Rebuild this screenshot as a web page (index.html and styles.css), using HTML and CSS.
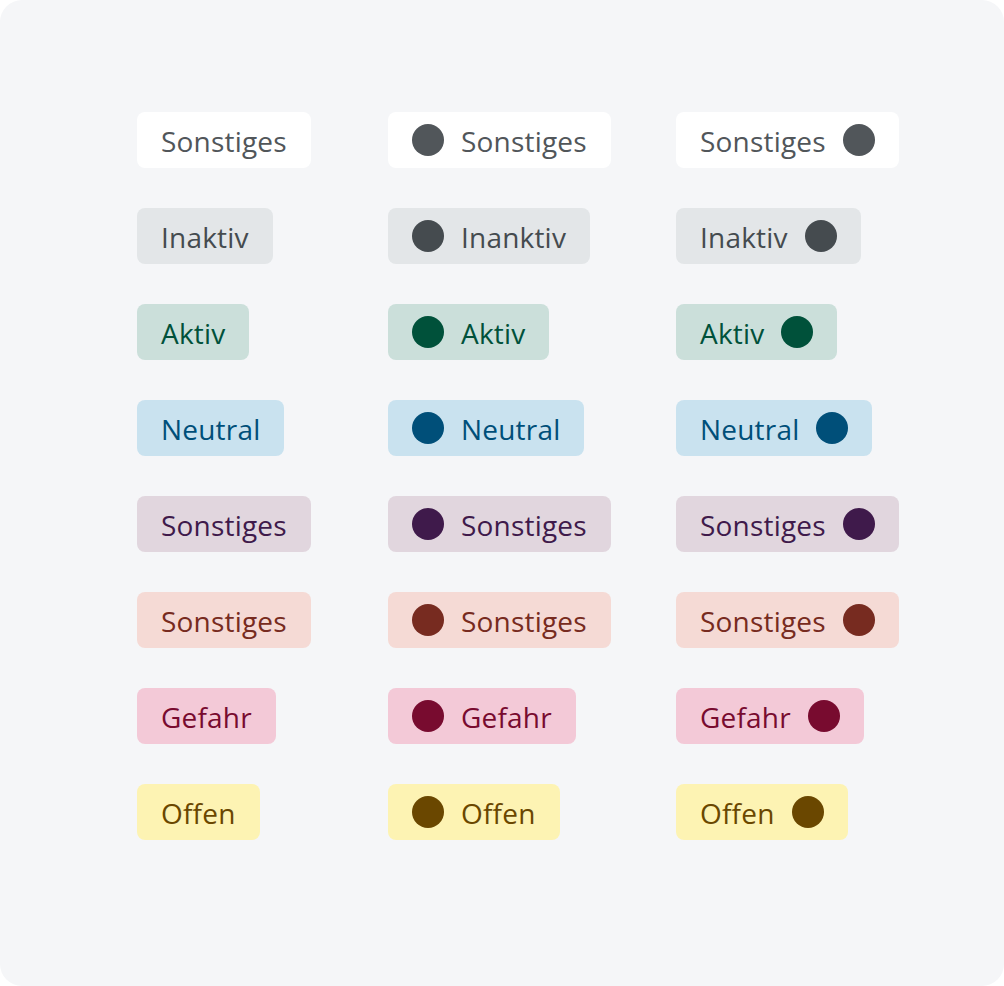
FILE: index.html
```html
<!DOCTYPE html>
<html lang="de">
<head>
<meta charset="utf-8">
<title>Badges</title>
<link rel="stylesheet" href="styles.css">
</head>
<body>
<main class="panel">
  <div class="grid">
    <span class="badge b-white">Sonstiges</span>
    <span class="badge b-white"><i class="dot"></i>Sonstiges</span>
    <span class="badge b-white">Sonstiges<i class="dot"></i></span>

    <span class="badge b-grey">Inaktiv</span>
    <span class="badge b-grey"><i class="dot"></i>Inanktiv</span>
    <span class="badge b-grey">Inaktiv<i class="dot"></i></span>

    <span class="badge b-green">Aktiv</span>
    <span class="badge b-green"><i class="dot"></i>Aktiv</span>
    <span class="badge b-green">Aktiv<i class="dot"></i></span>

    <span class="badge b-blue">Neutral</span>
    <span class="badge b-blue"><i class="dot"></i>Neutral</span>
    <span class="badge b-blue">Neutral<i class="dot"></i></span>

    <span class="badge b-purple">Sonstiges</span>
    <span class="badge b-purple"><i class="dot"></i>Sonstiges</span>
    <span class="badge b-purple">Sonstiges<i class="dot"></i></span>

    <span class="badge b-red">Sonstiges</span>
    <span class="badge b-red"><i class="dot"></i>Sonstiges</span>
    <span class="badge b-red">Sonstiges<i class="dot"></i></span>

    <span class="badge b-pink">Gefahr</span>
    <span class="badge b-pink"><i class="dot"></i>Gefahr</span>
    <span class="badge b-pink">Gefahr<i class="dot"></i></span>

    <span class="badge b-yellow">Offen</span>
    <span class="badge b-yellow"><i class="dot"></i>Offen</span>
    <span class="badge b-yellow">Offen<i class="dot"></i></span>
  </div>
</main>
</body>
</html>
```
FILE: styles.css
```css
html, body {
  margin: 0;
  padding: 0;
  background: #ffffff;
}
.panel {
  box-sizing: border-box;
  width: 1004px;
  height: 986px;
  background: #f5f6f8;
  border-radius: 22px;
  padding: 112px 0 0 137px;
}
.grid {
  display: grid;
  grid-template-columns: 251px 288px auto;
  row-gap: 40px;
  justify-items: start;
}
.badge {
  box-sizing: border-box;
  height: 56px;
  display: inline-flex;
  align-items: center;
  gap: 17px;
  padding: 2px 24px 0;
  border-radius: 8px;
  font-family: "Open Sans", "Noto Sans", sans-serif;
  font-size: 28px;
  letter-spacing: 0.2px;
  line-height: 1;
  white-space: nowrap;
}
.dot {
  display: block;
  width: 32px;
  height: 32px;
  margin-top: -2px;
  border-radius: 50%;
  background: currentColor;
  flex: none;
}
.b-white  { background: #ffffff; color: #51565a; }
.b-grey   { background: #e3e6e8; color: #454b4f; }
.b-green  { background: #cbdfda; color: #00513a; }
.b-blue   { background: #c9e2ef; color: #004f79; }
.b-purple { background: #e1d6de; color: #3f1a4b; }
.b-red    { background: #f5dad5; color: #772b20; }
.b-pink   { background: #f3c9d7; color: #780b2f; }
.b-yellow { background: #fdf3b3; color: #6a4700; }
```
